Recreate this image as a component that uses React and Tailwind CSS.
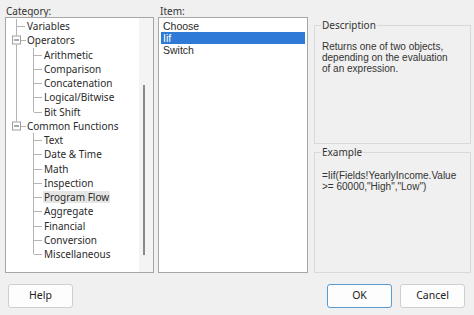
import React from "react";

const ops = ["Arithmetic", "Comparison", "Concatenation", "Logical/Bitwise", "Bit Shift"];
const funcs = ["Text", "Date & Time", "Math", "Inspection", "Program Flow", "Aggregate", "Financial", "Conversion", "Miscellaneous"];

function VLine({ half }) {
  return (
    <span
      className={`absolute left-[10px] top-0 w-px bg-[#b4b4b4] ${half ? "h-1/2" : "h-full"}`}
    />
  );
}

function Dash({ from }) {
  return <span className={`absolute top-1/2 h-px bg-[#b4b4b4] ${from}`} />;
}

function Expander() {
  return (
    <span className="absolute left-[6px] top-1/2 -translate-y-1/2 w-[9px] h-[9px] border border-[#a0a0a0] bg-white flex items-center justify-center">
      <span className="w-[5px] h-px bg-[#555]" />
    </span>
  );
}

function Row({ children }) {
  return <div className="flex items-center h-[14.25px]">{children}</div>;
}

function Top({ label, expander, half }) {
  return (
    <Row>
      <span className="relative w-[21px] h-full shrink-0">
        <VLine half={half} />
        <Dash from={expander ? "left-[15px] w-[5px]" : "left-[11px] w-[8px]"} />
        {expander && <Expander />}
      </span>
      <span className="whitespace-nowrap">{label}</span>
    </Row>
  );
}

function Child({ label, rootLine, last, hl }) {
  return (
    <Row>
      <span className="relative w-[17px] h-full shrink-0">{rootLine && <VLine />}</span>
      <span className="relative w-[20px] h-full shrink-0">
        <VLine half={last} />
        <Dash from="left-[11px] w-[8px]" />
      </span>
      <span className={`whitespace-nowrap px-[1px] leading-[12px] ${hl ? "bg-[#e6e6e6]" : ""}`}>{label}</span>
    </Row>
  );
}

function Btn({ children, primary }) {
  return (
    <button
      className={`w-[65px] h-[24px] rounded-[3px] bg-[#fdfdfd] text-[10.5px] text-[#222] border ${
        primary ? "border-[#5b9bd5]" : "border-[#cfcfcf]"
      }`}
    >
      {children}
    </button>
  );
}

const arial = { fontFamily: '"Liberation Sans", Arial, sans-serif' };

export default function App() {
  return (
    <div
      className="w-[474px] h-[315px] bg-[#f0f0f0] flex flex-col text-[#222] overflow-hidden"
      style={{ fontFamily: '"Noto Sans", "Open Sans", sans-serif' }}
    >
      <div className="flex pl-[5px]">
        {/* Category */}
        <div className="flex flex-col w-[149px]">
          <div className="mt-[5px] h-[12px] leading-[12px] text-[10px] pl-[1px] text-[#333]">Category:</div>
          <div className="h-[256px] border border-[#a6a6a6] bg-white flex text-[10px] leading-[14px] text-[#2a2a2a]">
            <div className="flex-1 flex flex-col pt-[1px]">
              <Top label="Variables" />
              <Top label="Operators" expander />
              {ops.map((o, i) => (
                <Child key={o} label={o} rootLine last={i === ops.length - 1} />
              ))}
              <Top label="Common Functions" expander half />
              {funcs.map((f, i) => (
                <Child key={f} label={f} last={i === funcs.length - 1} hl={f === "Program Flow"} />
              ))}
            </div>
            <div className="w-[14px] bg-[#f4f4f4] flex justify-center">
              <div className="mt-[67px] w-[2px] h-[170px] bg-[#8a8a8a] mr-[5px]" />
            </div>
          </div>
        </div>

        {/* Item */}
        <div className="flex flex-col w-[150px] ml-[4px]">
          <div className="mt-[5px] h-[12px] leading-[12px] text-[10px] pl-[2px] text-[#333]">Item:</div>
          <div
            className="h-[256px] border border-[#a6a6a6] bg-white px-[2px] pt-[2px] text-[10.5px] text-[#2a2a2a]"
            style={arial}
          >
            <div className="h-[12px] leading-[12px] pl-[2px]">Choose</div>
            <div className="h-[12px] leading-[12px] pl-[2px] bg-[#2f7ad6] text-white">Iif</div>
            <div className="h-[12px] leading-[12px] pl-[2px]">Switch</div>
          </div>
        </div>

        {/* Right */}
        <div className="flex flex-col w-[157px] ml-[6px]">
          <fieldset className="mt-[19px] h-[125px] border border-[#d9d9d9]">
            <legend className="ml-[6px] px-[1px] h-[12px] leading-[12px] text-[10px] text-[#333]">Description</legend>
            <div className="pl-[7px] pt-[10px] text-[10px] leading-[11.2px] text-[#333]" style={arial}>
              Returns one of two objects,
              <br />
              depending on the evaluation
              <br />
              of an expression.
            </div>
          </fieldset>
          <fieldset className="mt-[2px] h-[127px] border border-[#d9d9d9]">
            <legend className="ml-[6px] px-[1px] h-[12px] leading-[12px] text-[10px] text-[#333]">Example</legend>
            <div className="pl-[7px] pt-[12px] text-[10px] leading-[11.2px] text-[#333]" style={arial}>
              =Iif(Fields!YearlyIncome.Value
              <br />
              &gt;= 60000,"High","Low")
            </div>
          </fieldset>
        </div>
      </div>

      <div className="flex mt-[11px] px-[8px] items-center">
        <Btn>Help</Btn>
        <div className="flex-1" />
        <Btn primary>OK</Btn>
        <div className="w-[8px]" />
        <Btn>Cancel</Btn>
        <div className="w-[1px]" />
      </div>
    </div>
  );
}
